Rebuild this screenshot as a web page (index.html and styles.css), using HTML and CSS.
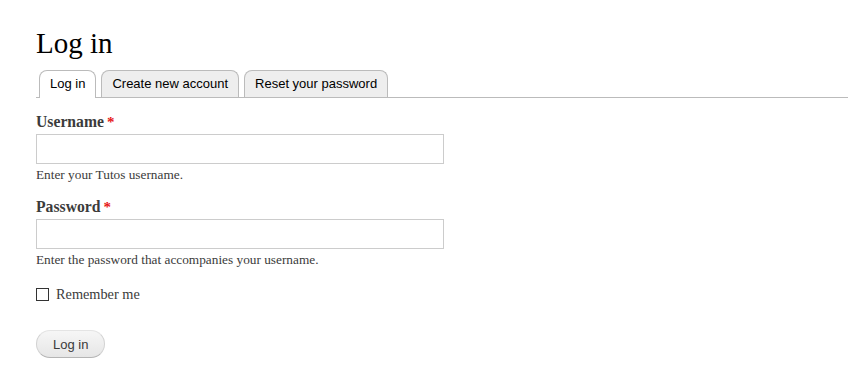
FILE: index.html
```html
<!DOCTYPE html>
<html lang="en">
<head>
<meta charset="utf-8">
<title>Log in</title>
<link rel="stylesheet" href="styles.css">
</head>
<body>
<main class="page">
  <h1 class="title">Log in</h1>
  <ul class="tabs">
    <li class="tab active"><a href="#">Log in</a></li>
    <li class="tab"><a href="#">Create new account</a></li>
    <li class="tab"><a href="#">Reset your password</a></li>
  </ul>
  <form class="login-form">
    <div class="form-item">
      <label class="label" for="name">Username<span class="required">*</span></label>
      <input class="text-input" type="text" id="name">
      <div class="description">Enter your Tutos username.</div>
    </div>
    <div class="form-item">
      <label class="label" for="pass">Password<span class="required">*</span></label>
      <input class="text-input" type="password" id="pass">
      <div class="description">Enter the password that accompanies your username.</div>
    </div>
    <div class="checkbox-row">
      <input class="checkbox" type="checkbox" id="remember">
      <label class="checkbox-label" for="remember">Remember me</label>
    </div>
    <div class="actions">
      <button class="button" type="button">Log in</button>
    </div>
  </form>
</main>
</body>
</html>
```
FILE: styles.css
```css
html, body {
  margin: 0;
  padding: 0;
  background: #fff;
}

.page {
  padding: 27px 0 0 36px;
  font-family: "Liberation Serif", "Times New Roman", serif;
  color: #3b3b3b;
}

.title {
  margin: 0;
  font-family: "Liberation Serif", "Times New Roman", serif;
  font-weight: normal;
  font-size: 29px;
  line-height: 32px;
  color: #000;
}

.tabs {
  display: flex;
  align-items: flex-end;
  gap: 5px;
  list-style: none;
  margin: 11px 0 0;
  padding: 0 3px;
  border-bottom: 1px solid #bbb;
}

.tab a {
  display: block;
  height: 26px;
  line-height: 26px;
  padding: 0 10px;
  border: 1px solid #bbb;
  border-bottom: 0;
  border-radius: 8px 8px 0 0;
  background: #eee;
  font-family: "Liberation Sans", Arial, sans-serif;
  font-size: 13px;
  color: #000;
  text-decoration: none;
}

.tab.active a {
  background: #fff;
  height: 27px;
  line-height: 26px;
  margin-bottom: -1px;
}

.login-form {
  margin: 0;
}

.form-item {
  margin-top: 15px;
}

.label {
  display: block;
  font-size: 15.7px;
  line-height: 18px;
  font-weight: bold;
  color: #3b3b3b;
  margin-bottom: 3px;
}

.required {
  color: #e61717;
  margin-left: 3px;
  font-size: 15px;
}

.text-input {
  display: block;
  box-sizing: border-box;
  width: 408px;
  height: 30px;
  margin: 0;
  padding: 4px 6px;
  border: 1px solid #cccccc;
  border-radius: 0;
  background: #fff;
  font-size: 13px;
}

.description {
  margin-top: 3px;
  font-size: 13.3px;
  line-height: 16px;
  color: #3b3b3b;
}

.checkbox-row {
  display: flex;
  align-items: center;
  gap: 7px;
  margin-top: 17px;
  height: 18px;
}

.checkbox {
  appearance: none;
  -webkit-appearance: none;
  box-sizing: border-box;
  width: 13px;
  height: 13px;
  margin: 0;
  border: 1px solid #333;
  background: #fff;
}

.checkbox-label {
  font-size: 14.3px;
  line-height: 18px;
  color: #3b3b3b;
}

.actions {
  margin-top: 27px;
}

.button {
  box-sizing: border-box;
  height: 28px;
  padding: 0 16px;
  border: 1px solid #d2d2d2;
  border-top-color: #e4e4e4;
  border-bottom-color: #b4b4b4;
  border-radius: 14px;
  background: linear-gradient(to bottom, #f6f6f6, #e6e6e6);
  font-family: "Liberation Sans", Arial, sans-serif;
  font-size: 13px;
  color: #3a3a3a;
  cursor: pointer;
}
```
